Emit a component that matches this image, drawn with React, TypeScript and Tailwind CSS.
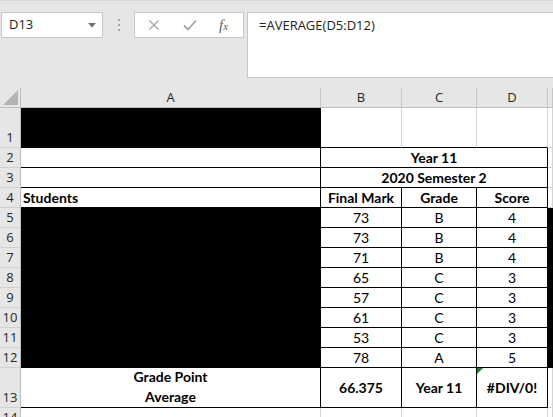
import type { ReactNode } from "react"

const rows = [
  { n: 5, mark: 73, grade: "B", score: 4 },
  { n: 6, mark: 73, grade: "B", score: 4 },
  { n: 7, mark: 71, grade: "B", score: 4 },
  { n: 8, mark: 65, grade: "C", score: 3 },
  { n: 9, mark: 57, grade: "C", score: 3 },
  { n: 10, mark: 61, grade: "C", score: 3 },
  { n: 11, mark: 53, grade: "C", score: 3 },
  { n: 12, mark: 78, grade: "A", score: 5 },
]

function Cell({ className, children }: { className: string; children?: ReactNode }) {
  return <div className={`border-r border-b flex ${className}`}>{children}</div>
}

function RowHead({ n, tall }: { n: number | string; tall?: boolean }) {
  return (
    <div
      className={`bg-[#e6e6e6] border-r border-b border-r-[#bdbdbd] border-b-[#d0d0d0] flex items-end justify-center text-[13px] leading-[19px] text-[#262626] font-['Open_Sans',sans-serif] ${tall ? "" : ""}`}
    >
      {n}
    </div>
  )
}

function ColHead({ label }: { label: string }) {
  return (
    <div className="bg-[#e6e6e6] border-r border-b border-r-[#c6c6c6] border-b-[#bdbdbd] flex items-center justify-center text-[13px] text-[#262626] font-['Open_Sans',sans-serif]">
      {label}
    </div>
  )
}

function Toolbar() {
  return (
    <div className="h-[88px] border-t border-[#d6d6d6] flex items-start pt-[11px] font-['Open_Sans',sans-serif]">
      {/* name box */}
      <div className="ml-px w-[102px] h-[26px] bg-white border border-[#c6c6c6] flex items-center justify-between pl-[7px] pr-[6px]">
        <span className="text-[13px] text-[#222]">D13</span>
        <svg width="8" height="5" viewBox="0 0 8 5">
          <path d="M0 0h8L4 4.5z" fill="#707070" />
        </svg>
      </div>
      <div className="w-[31px] h-[26px] flex flex-col items-center justify-center gap-[3px]">
        <span className="w-[2px] h-[2px] bg-[#a8a8a8]" />
        <span className="w-[2px] h-[2px] bg-[#a8a8a8]" />
        <span className="w-[2px] h-[2px] bg-[#a8a8a8]" />
      </div>
      {/* cancel / enter / insert function */}
      <div className="w-[110px] h-[26px] bg-white border border-[#c6c6c6] flex items-center">
        <svg className="ml-[13px]" width="12" height="12" viewBox="0 0 12 12">
          <path d="M1.5 1.5l9 9M10.5 1.5l-9 9" stroke="#a6a6a6" strokeWidth="1.3" />
        </svg>
        <svg className="ml-[23px]" width="14" height="12" viewBox="0 0 14 12">
          <path d="M1 6.5l4 4L13 1.5" stroke="#a6a6a6" strokeWidth="1.8" fill="none" />
        </svg>
        <span className="ml-[22px] font-['Liberation_Serif',serif] italic text-[15px] text-[#5f5f5f] leading-none">
          f<span className="text-[11px]">x</span>
        </span>
      </div>
      <div className="ml-[3px] flex-1 -mr-px h-[66px] bg-white border border-[#c6c6c6] pl-[11px] pt-[3px] text-[13px] text-[#222]">
        =AVERAGE(D5:D12)
      </div>
    </div>
  )
}

const gray = "border-r-[#d4d4d4] border-b-[#d4d4d4] bg-white"
const boxed = "border-r-black border-b-black bg-white justify-center items-end"
const bold = "font-bold"

export default function App() {
  return (
    <div className="w-[553px] h-[417px] overflow-hidden bg-[#e6e6e6] text-black">
      <Toolbar />
      <div className="grid grid-cols-[21px_300px_81px_75px_71px_1fr] grid-rows-[20px_40px_repeat(11,20px)_40px_1fr] h-[329px] font-['Lato',sans-serif] text-[14px] leading-[19px]">
        {/* column header row */}
        <div className="bg-[#e6e6e6] border-r border-b border-r-[#bdbdbd] border-b-[#bdbdbd] flex items-end justify-end pr-[2px] pb-[2px]">
          <svg width="15" height="15" viewBox="0 0 15 15">
            <path d="M15 0V15H0z" fill="#b4b4b4" />
          </svg>
        </div>
        <ColHead label="A" />
        <ColHead label="B" />
        <ColHead label="C" />
        <ColHead label="D" />
        <ColHead label="" />

        {/* row 1 */}
        <RowHead n={1} />
        <Cell className="border-r-black border-b-black bg-black" />
        <Cell className="border-r-[#d4d4d4] border-b-black bg-white" />
        <Cell className="border-r-[#d4d4d4] border-b-black bg-white" />
        <Cell className="border-r-[#d4d4d4] border-b-black bg-white" />
        <Cell className={gray} />

        {/* rows 2-3: merged title cells */}
        <RowHead n={2} />
        <Cell className="border-r-black border-b-black bg-white" />
        <div className={`col-span-3 border-r border-b flex ${boxed} ${bold}`}>Year 11</div>
        <Cell className={gray} />

        <RowHead n={3} />
        <Cell className="border-r-black border-b-black bg-white" />
        <div className={`col-span-3 border-r border-b flex ${boxed} ${bold}`}>2020 Semester 2</div>
        <Cell className={gray} />

        {/* row 4: column titles */}
        <RowHead n={4} />
        <Cell className={`border-r-black border-b-black bg-white items-end pl-[2px] ${bold}`}>Students</Cell>
        <Cell className={`${boxed} ${bold}`}>Final Mark</Cell>
        <Cell className={`${boxed} ${bold}`}>Grade</Cell>
        <Cell className={`${boxed} ${bold}`}>Score</Cell>
        <Cell className={gray} />

        {rows.map((r) => (
          <div key={r.n} className="contents">
            <RowHead n={r.n} />
            <Cell className="border-r-black border-b-black bg-black" />
            <Cell className={boxed}>{r.mark}</Cell>
            <Cell className={boxed}>{r.grade}</Cell>
            <Cell className={boxed}>{r.score}</Cell>
            <Cell className="border-r-black border-b-black bg-black" />
          </div>
        ))}

        {/* row 13: averages */}
        <RowHead n={13} />
        <Cell className={`border-r-black border-b-black bg-white flex-col items-center justify-end leading-[20px] ${bold}`}>
          <span>Grade Point</span>
          <span>Average</span>
        </Cell>
        <Cell className={`border-r-black border-b-black bg-white justify-center items-center ${bold}`}>66.375</Cell>
        <Cell className={`border-r-black border-b-black bg-white justify-center items-center ${bold}`}>Year 11</Cell>
        <Cell className={`relative border-r-black border-b-black bg-white justify-center items-center ${bold}`}>
          <svg className="absolute left-0 top-0" width="6" height="6" viewBox="0 0 6 6">
            <path d="M0 0h6L0 6z" fill="#1f7a35" />
          </svg>
          #DIV/0!
        </Cell>
        <Cell className={gray} />

        {/* row 14 */}
        <RowHead n={14} />
        <Cell className={gray} />
        <Cell className={gray} />
        <Cell className={gray} />
        <Cell className={gray} />
        <Cell className={gray} />
      </div>
    </div>
  )
}
